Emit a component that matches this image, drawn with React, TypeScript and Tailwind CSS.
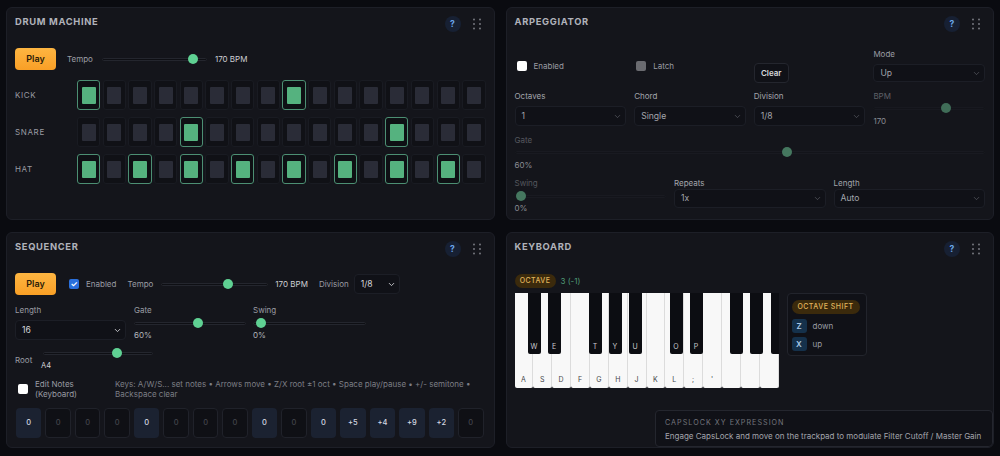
import { ChevronDown } from "lucide-react";

const whiteKeys = ["A", "S", "D", "F", "G", "H", "J", "K", "L", ";", "'", "", "", ""];
const blackKeys = [
  { left: 13, label: "W" },
  { left: 33, label: "E" },
  { left: 74, label: "T" },
  { left: 94, label: "Y" },
  { left: 114, label: "U" },
  { left: 155, label: "O" },
  { left: 175, label: "P" },
  { left: 215, label: "" },
  { left: 235, label: "" },
  { left: 256, label: "" },
];
const tracks = [
  { name: "KICK", on: [0, 8] },
  { name: "SNARE", on: [4, 12] },
  { name: "HAT", on: [0, 2, 4, 6, 8, 10, 12, 14] },
];
const seqSteps = ["0", "", "", "", "0", "", "", "", "0", "", "0", "+5", "+4", "+9", "+2", ""];

function Grip() {
  return (
    <svg width="8" height="12" viewBox="0 0 8 12" className="fill-[#7f8189]">
      <circle cx="1" cy="1.5" r="0.9" />
      <circle cx="7" cy="1.5" r="0.9" />
      <circle cx="1" cy="6" r="0.9" />
      <circle cx="7" cy="6" r="0.9" />
      <circle cx="1" cy="10.5" r="0.9" />
      <circle cx="7" cy="10.5" r="0.9" />
    </svg>
  );
}

function Panel({ title, children }: { title: string; children: React.ReactNode }) {
  return (
    <section className="relative rounded-md border border-[#1d1f27] bg-[#14151b] px-2 overflow-hidden">
      <div className="h-[40px] flex items-start justify-between">
        <h2 className="pt-[7px] text-[9.4px] leading-[14px] font-bold tracking-[0.07em] text-[#b0b2ba]">{title}</h2>
        <div className="flex items-center gap-3 pt-2 pr-[5px]">
          <span className="w-4 h-4 rounded-full bg-[#172033] flex items-center justify-center text-[8.5px] font-bold text-[#6aa5e8]">?</span>
          <Grip />
        </div>
      </div>
      {children}
    </section>
  );
}

function Slider({ pct, className, dim }: { pct: number; className: string; dim?: boolean }) {
  return (
    <div className={`relative h-[10px] flex items-center ${className}`}>
      <div className={`w-full h-[3px] rounded-full border ${dim ? "border-[#191a21] bg-[#13141a]" : "border-[#24262e] bg-[#0e0f14]"}`} />
      <span
        className={`absolute top-0 w-[10px] h-[10px] -ml-[5px] rounded-full ${dim ? "bg-[#45775f]" : "bg-[#5fd193]"}`}
        style={{ left: `${pct}%` }}
      />
    </div>
  );
}

function Select({ value, className, bright }: { value: string; className: string; bright?: boolean }) {
  return (
    <div className={`relative flex items-center rounded-[4px] border border-[#1c1e26] bg-[#101117] pl-[6px] text-[8.6px] ${bright ? "text-[#d5d6da]" : "text-[#a3a5ac]"} ${className}`}>
      <span>{value}</span>
      <ChevronDown size={9} strokeWidth={bright ? 2.5 : 1.5} className={`absolute right-[3px] ${bright ? "text-[#c5c6cb]" : "text-[#6b6d75]"}`} />
    </div>
  );
}

function PlayButton() {
  return (
    <button className="w-[41px] h-[22px] rounded-[4px] bg-gradient-to-b from-[#fdb541] to-[#f99f25] text-[9px] font-semibold text-[#2a1c08]">
      Play
    </button>
  );
}

function DrumMachine() {
  return (
    <Panel title="DRUM MACHINE">
      <div className="flex items-center h-[22px] text-[8px]">
        <PlayButton />
        <span className="ml-[11px] text-[#9c9ea5]">Tempo</span>
        <Slider pct={87} className="ml-[9px] w-[105px]" />
        <span className="ml-2 text-[#cfd0d5]">170 BPM</span>
      </div>
      <div className="mt-[10px] flex flex-col gap-[7px]">
        {tracks.map((t) => (
          <div key={t.name} className="flex items-center">
            <span className="w-[62px] text-[8px] tracking-[0.08em] text-[#9a9ca3]">{t.name}</span>
            <div className="flex-1 grid grid-cols-[repeat(16,1fr)] gap-[2.4px]">
              {Array.from({ length: 16 }, (_, i) => {
                const on = t.on.includes(i);
                return (
                  <div
                    key={i}
                    className={`h-[30px] rounded-[3px] border flex items-center justify-center ${on ? "border-[#4c8f73] bg-[#0e1014]" : "border-[#191b22] bg-[#101116]"}`}
                  >
                    <div className={`w-[14px] h-[17px] rounded-[1px] ${on ? "bg-[#55b27f]" : "bg-[#2a2c37]"}`} />
                  </div>
                );
              })}
            </div>
          </div>
        ))}
      </div>
    </Panel>
  );
}

function Arpeggiator() {
  return (
    <Panel title="ARPEGGIATOR">
      <div className="text-[8px] text-[#a3a5ac]">
        <div className="grid grid-cols-4 gap-x-2 h-[36px] -mt-px">
          <div className="flex items-center gap-[7px] pl-[2px] pt-[2px]">
            <span className="w-[10px] h-[10px] rounded-[2px] bg-white" />
            <span className="text-[#9a9ca3]">Enabled</span>
          </div>
          <div className="flex items-center gap-[7px] pl-[2px] pt-[2px]">
            <span className="w-[10px] h-[10px] rounded-[2px] bg-[#6a6b70]" />
            <span className="text-[#9a9ca3]">Latch</span>
          </div>
          <div className="flex items-end">
            <button className="w-[35px] h-[20px] rounded-[4px] border border-[#24262e] bg-[#101117] text-[8px] font-semibold text-[#d8d9dd]">Clear</button>
          </div>
          <div>
            <div className="h-[14px] leading-[14px] text-[#9a9ca3]">Mode</div>
            <Select value="Up" className="h-[18px] mt-[3px]" />
          </div>
        </div>
        <div className="mt-[6px] grid grid-cols-4 gap-x-2">
          <div>
            <div className="h-[14px] leading-[14px]">Octaves</div>
            <Select value="1" className="h-[20px] mt-[3px]" />
          </div>
          <div>
            <div className="h-[14px] leading-[14px]">Chord</div>
            <Select value="Single" className="h-[20px] mt-[3px]" />
          </div>
          <div>
            <div className="h-[14px] leading-[14px]">Division</div>
            <Select value="1/8" className="h-[20px] mt-[3px]" />
          </div>
          <div className="text-[#5f6168]">
            <div className="h-[14px] leading-[14px]">BPM</div>
            <Slider pct={65} className="w-full opacity-90" dim />
            <div className="mt-[2px] leading-[12px] text-[#8a8c93]">170</div>
          </div>
        </div>
        <div className="mt-[6px]">
          <div className="h-[14px] leading-[14px] text-[#55575e]">Gate</div>
          <Slider pct={58} className="w-full" dim />
          <div className="mt-px h-[15px] leading-[15px] text-[#8a8c93]">60%</div>
        </div>
        <div className="mt-[3px] grid grid-cols-3 gap-x-2">
          <div>
            <div className="h-[14px] leading-[14px] text-[#55575e]">Swing</div>
            <Slider pct={4.6} className="w-full mt-px" dim />
            <div className="h-[15px] leading-[15px] text-[#8a8c93]">0%</div>
          </div>
          <div>
            <div className="h-[14px] leading-[14px]">Repeats</div>
            <Select value="1x" className="h-[19px] -mt-px" />
          </div>
          <div>
            <div className="h-[14px] leading-[14px]">Length</div>
            <Select value="Auto" className="h-[19px] -mt-px" />
          </div>
        </div>
      </div>
    </Panel>
  );
}

function Sequencer() {
  return (
    <Panel title="SEQUENCER">
      <div className="text-[8px] text-[#9a9ca3]">
        <div className="flex items-center h-[22px]">
          <PlayButton />
          <span className="ml-[13px] w-[10px] h-[10px] rounded-[2px] bg-[#2a6fdb] flex items-center justify-center text-[8px] font-bold text-white">✓</span>
          <span className="ml-[7px]">Enabled</span>
          <span className="ml-[11px]">Tempo</span>
          <Slider pct={62.6} className="ml-2 w-[107px]" />
          <span className="ml-[7px] text-[#cfd0d5]">170 BPM</span>
          <span className="ml-[11px]">Division</span>
          <Select value="1/8" bright className="ml-[5px] w-[46px] h-[20px]" />
        </div>
        <div className="mt-2 flex gap-2">
          <div className="w-[111px]">
            <div className="h-[14px] leading-[14px]">Length</div>
            <Select value="16" bright className="h-[20px] mt-[3px]" />
          </div>
          <div className="w-[112px]">
            <div className="h-[14px] leading-[14px]">Gate</div>
            <Slider pct={57} className="w-full mt-px" />
            <div className="mt-px leading-[12px] text-[#b3b5bb]">60%</div>
          </div>
          <div className="ml-[-1px] w-[113px]">
            <div className="h-[14px] leading-[14px]">Swing</div>
            <Slider pct={7} className="w-full mt-px" />
            <div className="mt-px leading-[12px] text-[#b3b5bb]">0%</div>
          </div>
        </div>
        <div className="mt-[7px] flex items-end h-[24px]">
          <span className="w-[26px] pb-[6px] leading-[12px]">Root</span>
          <div className="ml-[2px]">
            <Slider pct={67} className="w-[110px]" />
            <div className="mt-[2px] text-[7.5px] leading-[12px] -ml-[2px] text-[#cfd0d5]">A4</div>
          </div>
        </div>
        <div className="mt-[7px] flex items-center">
          <span className="ml-[3px] w-[10px] h-[10px] rounded-[2px] bg-white" />
          <span className="ml-[7px] w-[80px] leading-[10px]">Edit Notes (Keyboard)</span>
          <span className="w-[356px] leading-[10px] text-[8px] text-[#7c7e85]">
            Keys: A/W/S... set notes • Arrows move • Z/X root ±1 oct • Space play/pause • +/- semitone • Backspace clear
          </span>
        </div>
        <div className="mt-[9px] mx-px grid grid-cols-[repeat(16,1fr)] gap-[4px] pr-[1px]">
          {seqSteps.map((s, i) => (
            <div
              key={i}
              className={`h-[30px] rounded-[4px] flex items-center justify-center text-[7.5px] font-medium ${s ? "bg-[#1b2231] text-[#d5d9e2]" : "border border-[#20222a] bg-[#0f1015] text-[#42444b]"}`}
            >
              {s || "0"}
            </div>
          ))}
        </div>
      </div>
    </Panel>
  );
}

function Keyboard() {
  return (
    <Panel title="KEYBOARD">
      <div className="flex items-center h-[14px] mt-[1px]">
        <span className="h-[14px] w-[41px] flex items-center justify-center rounded-full bg-[#3b2a0c] text-[7px] font-medium tracking-[0.06em] text-[#e2b65c]">OCTAVE</span>
        <span className="ml-[5px] text-[#4f9a76] text-[8px]">3 (-1)</span>
      </div>
      <div className="mt-[5px] flex gap-2 items-start">
        <div className="relative w-[264px] h-[95px] flex overflow-hidden">
          {whiteKeys.map((k, i) => (
            <div key={i} className="flex-1 h-full rounded-b-[2px] bg-[#f8f8f8] border-r border-[#dcdcdc] flex items-end justify-center pb-[2px] text-[7px] leading-[12px] text-[#44454a]">
              {k}
            </div>
          ))}
          {blackKeys.map((k) => (
            <div
              key={k.left}
              className="absolute top-0 w-[13px] h-[61px] rounded-b-[2px] bg-[#0c0d12] flex items-end justify-center pb-[1px] text-[7px] leading-[12px] text-[#c9cace]"
              style={{ left: k.left }}
            >
              {k.label}
            </div>
          ))}
        </div>
        <div className="w-[80px] h-[63px] rounded-[4px] border border-[#22242c] bg-[#101117] px-[4px] pt-[6px] text-[8px] text-[#9a9ca3]">
          <span className="flex h-[14px] w-[68px] items-center justify-center whitespace-nowrap rounded-full bg-[#3b2a0c] text-[7px] font-medium tracking-[0.07em] text-[#e2b65c]">OCTAVE SHIFT</span>
          <div className="mt-[5px] flex items-center gap-[6px]">
            <span className="w-[15px] h-[14px] rounded-[3px] bg-[#15314b] flex items-center justify-center text-[8px] font-semibold text-[#a9c9e6]">Z</span>
            down
          </div>
          <div className="mt-[4px] flex items-center gap-[6px]">
            <span className="w-[15px] h-[14px] rounded-[3px] bg-[#15314b] flex items-center justify-center text-[8px] font-semibold text-[#a9c9e6]">X</span>
            up
          </div>
        </div>
      </div>
      <div className="absolute right-0 bottom-0 w-[338px] h-[37px] rounded-[4px] border border-[#24262e] bg-[#101117] pl-[9px] pt-[6px]">
        <div className="text-[7.2px] leading-[12px] tracking-[0.14em] text-[#73757c]">CAPSLOCK XY EXPRESSION</div>
        <div className="mt-[1px] text-[8px] leading-[13px] whitespace-nowrap text-[#a3a5ac]">
          Engage CapsLock and move on the trackpad to modulate Filter Cutoff / Master Gain
        </div>
      </div>
    </Panel>
  );
}

export default function App() {
  return (
    <div className="w-[1000px] h-[456px] bg-[#0a0b10] pt-[7px] pl-[6px] pr-[6px] font-['Inter',sans-serif] overflow-hidden">
      <div className="grid grid-cols-2 grid-rows-[213px_216px] gap-x-[11px] gap-y-[12px]">
        <DrumMachine />
        <Arpeggiator />
        <Sequencer />
        <Keyboard />
      </div>
    </div>
  );
}
